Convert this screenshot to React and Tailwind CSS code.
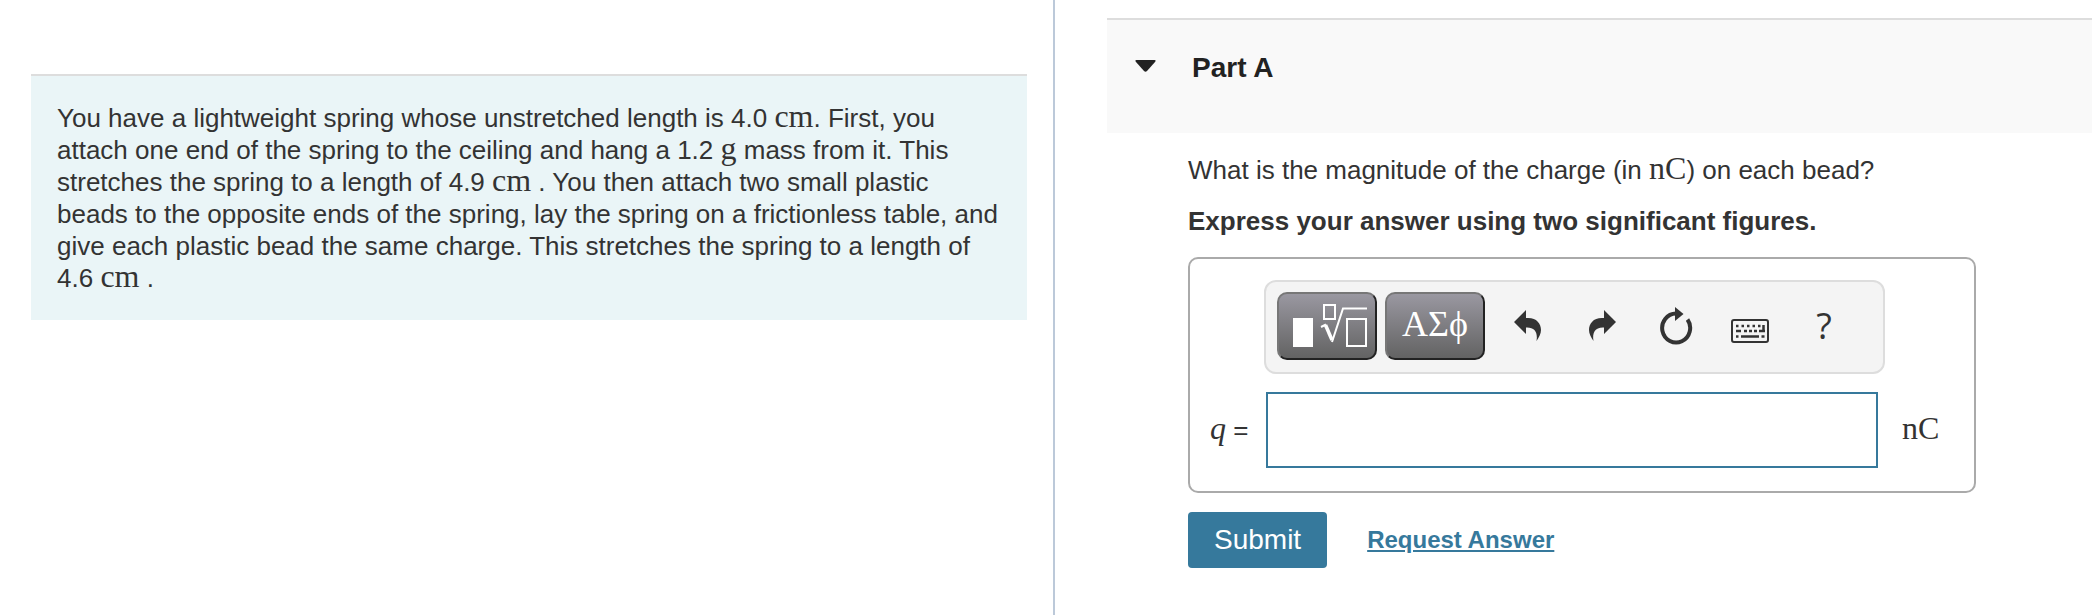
import React, { useState } from 'react';

const UndoIcon = () => (
  <svg width="28" height="32" viewBox="0 0 28 32" fill="#333" aria-hidden="true">
    <path d="M12 0 V8 C22 7 27 13 27 20 C27 24 25 27 22.500 31 C24 22 20.500 17 12 17.500 V24 L0 12 Z" />
  </svg>
);

const RedoIcon = () => (
  <svg width="28" height="32" viewBox="0 0 28 32" fill="#333" aria-hidden="true">
    <path d="M16 0 V8 C6 7 1 13 1 20 C1 24 3 27 5.500 31 C4 22 7.500 17 16 17.500 V24 L28 12 Z" />
  </svg>
);

const ResetIcon = () => (
  <svg width="34" height="38" viewBox="0 0 34 38" fill="none" aria-hidden="true">
    <path d="M17 6.500 A14 14.500 0 1 0 28.500 12.500" stroke="#333" strokeWidth="4" />
    <path d="M16 0 L24.500 7 L16 14 Z" fill="#333" />
  </svg>
);

const KeyboardIcon = () => (
  <svg width="40" height="34" viewBox="0 0 40 34" fill="none" stroke="#333" aria-hidden="true">
    <rect x="2" y="11" width="36" height="22" rx="2" strokeWidth="2" />
    <path d="M6 17 H31" strokeWidth="2.500" strokeDasharray="2.500 3" />
    <path d="M6 22 H11 M14 22 H17 M19 22 H22 M24 22 H27 M29 22 H35" strokeWidth="2.500" />
    <path d="M33.500 16 V23" strokeWidth="2.500" />
    <path d="M6 27.500 H8.500 M11 27.500 H29 M31.500 27.500 H34.500" strokeWidth="2.500" />
  </svg>
);

const TemplateIcon = () => (
  <svg width="80" height="46" viewBox="0 0 80 46" fill="none" stroke="#fff" aria-hidden="true">
    <rect x="6" y="15" width="20" height="29" fill="#fff" stroke="none" />
    <rect x="37" y="2" width="11" height="14" strokeWidth="2" />
    <rect x="60" y="16" width="19" height="27" strokeWidth="2" />
    <path d="M34 24 L39 21.500" strokeWidth="2" />
    <path d="M38.500 22 L45 37" strokeWidth="3.500" />
    <path d="M45 39 L56 5.500 H80" strokeWidth="2" />
  </svg>
);

const Unit = ({ children }) => (
  <span className="font-['Liberation_Serif',serif] text-[32px] leading-6">{children}</span>
);

const keyClass =
  'flex h-[68px] w-[100px] items-center justify-center rounded-[10px] border-2 border-t-[#777] border-l-[#777] border-r-[#222] border-b-[#222] bg-linear-to-b from-[#9a98a1] to-[#636363] text-white';

const tools = [
  { label: 'Undo', icon: UndoIcon },
  { label: 'Redo', icon: RedoIcon },
  { label: 'Reset', icon: ResetIcon },
  { label: 'Keyboard shortcuts', icon: KeyboardIcon },
];

const App = () => {
  const [answer, setAnswer] = useState('');
  const [open, setOpen] = useState(true);

  return (
    <div className="grid min-h-screen grid-cols-[1055fr_1037fr] bg-white font-['Liberation_Sans',sans-serif] text-[26px] leading-8 text-[#333]">
      {/* Problem statement */}
      <section className="border-r-2 border-[#bcc9d9] pt-[74px] pr-[26px] pl-[31px]">
        <p className="border-t-2 border-[#ddd] bg-[#eaf5f7] px-[26px] pt-[26px] pb-[26px]">
          You have a lightweight spring whose unstretched length is 4.0 <Unit>cm</Unit>. First, you
          attach one end of the spring to the ceiling and hang a 1.2 <Unit>g</Unit> mass from it. This
          stretches the spring to a length of 4.9 <Unit>cm</Unit> . You then attach two small plastic
          beads to the opposite ends of the spring, lay the spring on a frictionless table, and give
          each plastic bead the same charge. This stretches the spring to a length of
          4.6 <Unit>cm</Unit> .
        </p>
      </section>

      {/* Question part */}
      <main className="pt-[18px] pl-[52px]">
        <header className="h-[115px] border-t-2 border-[#ddd] bg-[#f9f9f9] pt-8 pl-7">
          <button
            className="flex items-center gap-9 text-[28px] font-bold text-[#222]"
            aria-expanded={open}
            onClick={() => setOpen(!open)}
          >
            <svg width="21" height="16" viewBox="0 0 21 16" fill="#222" aria-hidden="true">
              <path d="M1.500 0 H19.500 Q21.500 0 20 2 L12 11 Q10.500 12.500 9 11 L1 2 Q-0.500 0 1.500 0 Z" />
            </svg>
            Part A
          </button>
        </header>

        {open && (
          <div className="pt-[21px] pr-4 pl-[81px]">
            <p>
              What is the magnitude of the charge (in <Unit>nC</Unit>) on each bead?
            </p>
            <p className="mt-[19px] font-bold">Express your answer using two significant figures.</p>

            <div className="mt-5 max-w-[788px] rounded-[10px] border-2 border-[#aaa] pt-[21px] pb-[23px]">
              <div className="mr-[89px] ml-[74px] flex h-[94px] items-center rounded-xl border-2 border-[#ddd] bg-[#f4f4f4] px-[11px] pb-[2px]">
                <button className={keyClass} aria-label="Templates">
                  <TemplateIcon />
                </button>
                <button
                  className={`${keyClass} ml-2 pb-1 font-['Liberation_Serif',serif] text-[36px]`}
                  aria-label="Symbols"
                >
                  ΑΣϕ
                </button>
                <div className="ml-[19px] flex gap-[26px]">
                  {tools.map(({ label, icon: Icon }) => (
                    <button key={label} className="flex h-12 w-12 items-center justify-center" aria-label={label}>
                      <Icon />
                    </button>
                  ))}
                  <button className="h-12 w-12 font-['Open_Sans',sans-serif] text-[36px]" aria-label="Help">
                    ?
                  </button>
                </div>
              </div>

              <div className="mt-[18px] flex items-center">
                <label htmlFor="answer" className="w-[76px] pl-5">
                  <i className="font-['Liberation_Serif',serif] text-[32px] leading-6">q</i> =
                </label>
                <input
                  id="answer"
                  className="h-[76px] min-w-0 flex-1 border-2 border-[#36799c] bg-white px-3 outline-none"
                  value={answer}
                  onChange={(e) => setAnswer(e.target.value)}
                />
                <span className="w-24 pl-6">
                  <Unit>nC</Unit>
                </span>
              </div>
            </div>

            <div className="mt-[19px] flex items-center gap-10">
              <button className="h-14 rounded-sm bg-[#36799c] px-[26px] text-[28px] text-white">Submit</button>
              <a href="#request" className="text-[24px] font-bold text-[#36799c] underline">
                Request Answer
              </a>
            </div>
          </div>
        )}
      </main>
    </div>
  );
};

export default App;
